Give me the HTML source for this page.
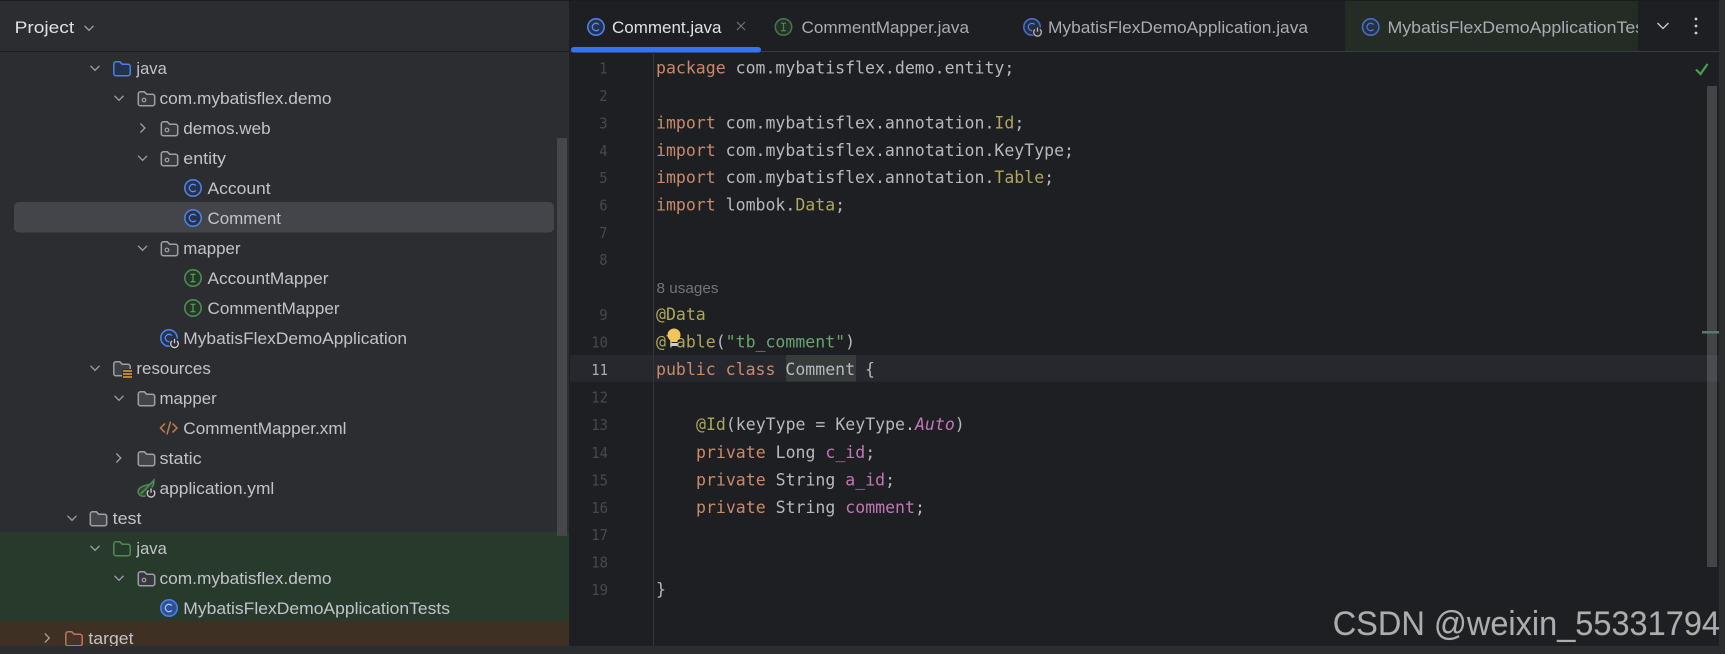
<!DOCTYPE html>
<html><head><meta charset="utf-8"><title>Comment.java</title>
<style>
html,body{margin:0;padding:0;background:#1e1f22;width:1725px;height:654px;overflow:hidden}
svg{display:block}
text{white-space:pre}
.u{font-family:"Liberation Sans",sans-serif;font-size:16.4px;fill:#c0c3ca}
.t{font-family:"Liberation Sans",sans-serif;font-size:16.4px;fill:#a8acb3}
.c{font-family:"DejaVu Sans Mono","Liberation Mono",monospace;font-size:16.55px;fill:#b6b8be}
.n{font-family:"DejaVu Sans Mono","Liberation Mono",monospace;font-size:15.5px;fill:#454950}
.k{fill:#c98a6a}.a{fill:#aca75c}.s{fill:#67a56f}.f{fill:#c077b5}
.chev{fill:none;stroke:#9da0a8;stroke-width:1.3}
</style></head><body>
<svg xmlns="http://www.w3.org/2000/svg" width="1725" height="654" viewBox="0 0 1725 654">
<defs>
<path id="fd" stroke-width="1.5" d="M.8 3A2.2 2.2 0 0 1 3 .8H6.8L9.2 3.200H15A2.200 2.200 0 0 1 17.200 5.400V12.600A2.200 2.200 0 0 1 15 14.800H3A2.200 2.200 0 0 1 .8 12.600Z"/>
<g id="pk"><use href="#fd" fill="#36383c" stroke="#9da0a8"/><circle cx="6.500" cy="9" r="1.800" fill="none" stroke="#9da0a8" stroke-width="1.200"/></g>
<path id="dn" class="chev" d="M-4.500-2.200 0 2.300 4.500-2.200"/>
<path id="rt" class="chev" d="M-2.200-4.500 2.300 0-2.200 4.500"/>
<g id="cl"><circle r="8.200" fill="#25324d" stroke="#4d7fe6" stroke-width="1.600"/><path d="M2.800-2.400A3.700 3.700 0 1 0 2.800 2.400" fill="none" stroke="#5a8cf0" stroke-width="1.300"/></g>
<g id="in"><circle r="8.200" fill="#253627" stroke="#4f8a55" stroke-width="1.600"/><path d="M-2.400-3.700H2.400M0-3.700V3.700M-2.400 3.700H2.400" fill="none" stroke="#57965c" stroke-width="1.300"/></g>
<g id="pw"><circle r="5.500" fill="#2b2d30"/><path d="M-2.500-2.600A3.800 3.800 0 1 0 2.500-2.600M0-4.600V-.2" fill="none" stroke="#ced0d6" stroke-width="1.300"/></g>
<clipPath id="lt"><rect x="1345" y="0" width="293" height="52"/></clipPath>
</defs>

<!-- backgrounds -->
<rect width="1725" height="654" fill="#1e1f22"/>
<rect x="0" y="0" width="569" height="654" fill="#2b2d30"/>
<rect x="0" y="0" width="1725" height="1" fill="#1a1b1d"/>
<rect x="0" y="51" width="569" height="1" fill="#1e1f22"/>
<rect x="14" y="202" width="540" height="30.500" rx="5" fill="#43454a"/>
<rect x="0" y="532" width="569" height="89" fill="#283a2b"/>
<rect x="0" y="621" width="569" height="25" fill="#3f3024"/>
<rect x="557" y="138" width="10" height="398" fill="#45474a"/>
<rect x="1719" y="0" width="6" height="654" fill="#2b2d30"/>

<!-- project header -->
<text class="u" x="14.700" y="33" textLength="59.500" lengthAdjust="spacingAndGlyphs" style="fill:#dfe1e5">Project</text>
<use href="#dn" x="89" y="28"/>

<!-- tree chevrons -->
<use href="#dn" x="95" y="68"/><use href="#dn" x="119" y="98"/><use href="#rt" x="142.600" y="128"/><use href="#dn" x="142.600" y="158"/>
<use href="#dn" x="142.600" y="248"/><use href="#dn" x="95" y="368"/><use href="#dn" x="119" y="398"/><use href="#rt" x="118.500" y="458"/>
<use href="#dn" x="72" y="518"/><use href="#dn" x="95" y="548"/><use href="#dn" x="119" y="578"/><use href="#rt" x="47" y="638"/>

<!-- tree icons -->
<use href="#fd" x="113" y="61" fill="#25324d" stroke="#4d7fe6"/>
<use href="#pk" x="137.500" y="91"/>
<use href="#pk" x="160.500" y="121"/>
<use href="#pk" x="160.500" y="151"/>
<use href="#cl" x="193" y="188"/>
<use href="#cl" x="193" y="218"/>
<use href="#pk" x="160.500" y="241"/>
<use href="#in" x="193" y="278"/>
<use href="#in" x="193" y="308"/>
<use href="#cl" x="169" y="338"/><use href="#pw" x="174.500" y="343.500"/>
<use href="#fd" x="113" y="361" fill="#3e4044" stroke="#9da0a8"/>
<rect x="122" y="369" width="11" height="9" fill="#2b2d30"/>
<path d="M123 371H132M123 374H132M123 377H132" stroke="#d9a343" stroke-width="1.500" fill="none"/>
<use href="#fd" x="137.500" y="391" fill="#43454a" stroke="#9da0a8"/>
<path d="M165 423.500 160.500 428 165 432.500M172.500 423.500 177 428 172.500 432.500M170.500 421.500 167 434.500" fill="none" stroke="#c57951" stroke-width="1.500"/>
<use href="#fd" x="137.500" y="451" fill="#43454a" stroke="#9da0a8"/>
<path d="M154 480C153.500 483 151 484 147 485C141 486.500 137.500 489 138.200 492.500C138.800 495.500 142 496.800 145.500 496M141 494C142 490.500 146 489.500 149 489C152 488.500 154 485.500 154 480Z" fill="#2d4a30" stroke="#4f8a55" stroke-width="1.500"/>
<use href="#pw" x="151" y="493"/>
<use href="#fd" x="89.500" y="511" fill="#43454a" stroke="#9da0a8"/>
<use href="#fd" x="113" y="541" fill="#283a2b" stroke="#4f8a55"/>
<use href="#pk" x="137.500" y="571"/>
<g transform="translate(169 608)"><circle r="8.200" fill="#2d4f96" stroke="#4d7fe6" stroke-width="1.600"/><path d="M2.800-2.400A3.700 3.700 0 1 0 2.800 2.400" fill="none" stroke="#a9c3f5" stroke-width="1.300"/></g>
<use href="#fd" x="65" y="631" fill="#45322b" stroke="#b8775a"/>

<!-- tree text -->
<text class="u" x="136.400" y="74" textLength="30.400" lengthAdjust="spacingAndGlyphs">java</text>
<text class="u" x="159.500" y="104" textLength="172" lengthAdjust="spacingAndGlyphs">com.mybatisflex.demo</text>
<text class="u" x="183.300" y="134" textLength="87.300" lengthAdjust="spacingAndGlyphs">demos.web</text>
<text class="u" x="183.300" y="164" textLength="42.700" lengthAdjust="spacingAndGlyphs">entity</text>
<text class="u" x="207.500" y="194" textLength="63.100" lengthAdjust="spacingAndGlyphs">Account</text>
<text class="u" x="207.500" y="224" textLength="73.500" lengthAdjust="spacingAndGlyphs">Comment</text>
<text class="u" x="183.300" y="254" textLength="57.200" lengthAdjust="spacingAndGlyphs">mapper</text>
<text class="u" x="207.500" y="284" textLength="121" lengthAdjust="spacingAndGlyphs">AccountMapper</text>
<text class="u" x="207.500" y="314" textLength="132.100" lengthAdjust="spacingAndGlyphs">CommentMapper</text>
<text class="u" x="183.300" y="344" textLength="223.700" lengthAdjust="spacingAndGlyphs">MybatisFlexDemoApplication</text>
<text class="u" x="136.400" y="374" textLength="74.400" lengthAdjust="spacingAndGlyphs">resources</text>
<text class="u" x="159.500" y="404" textLength="57.200" lengthAdjust="spacingAndGlyphs">mapper</text>
<text class="u" x="183.300" y="434" textLength="163.200" lengthAdjust="spacingAndGlyphs">CommentMapper.xml</text>
<text class="u" x="159.500" y="464" textLength="42.200" lengthAdjust="spacingAndGlyphs">static</text>
<text class="u" x="159.500" y="494" textLength="114.800" lengthAdjust="spacingAndGlyphs">application.yml</text>
<text class="u" x="112.600" y="524" textLength="28.900" lengthAdjust="spacingAndGlyphs">test</text>
<text class="u" x="136.400" y="554" textLength="30.400" lengthAdjust="spacingAndGlyphs">java</text>
<text class="u" x="159.500" y="584" textLength="172" lengthAdjust="spacingAndGlyphs">com.mybatisflex.demo</text>
<text class="u" x="183.300" y="614" textLength="266.700" lengthAdjust="spacingAndGlyphs">MybatisFlexDemoApplicationTests</text>
<text class="u" x="88.400" y="644" textLength="45.100" lengthAdjust="spacingAndGlyphs">target</text>
<rect x="0" y="646" width="1725" height="8" fill="#2b2d30"/>

<!-- tabs -->
<rect x="1345" y="1" width="293" height="50" fill="#252c26"/>
<rect x="570" y="51" width="1149" height="1" fill="#393b40"/>
<use href="#cl" x="596" y="27"/>
<text class="t" x="612" y="33" textLength="109.500" lengthAdjust="spacingAndGlyphs" style="fill:#dfe1e5">Comment.java</text>
<path d="M737 22 745 30M745 22 737 30" stroke="#6f7379" stroke-width="1.200" fill="none"/>
<rect x="571" y="47" width="190" height="5.500" rx="2.700" fill="#3574f0"/>
<g opacity=".8"><use href="#in" x="783.500" y="27"/></g>
<text class="t" x="801.500" y="33" textLength="167.500" lengthAdjust="spacingAndGlyphs">CommentMapper.java</text>
<g opacity=".85"><use href="#cl" x="1032" y="27"/><use href="#pw" x="1037.500" y="32"/></g>
<text class="t" x="1048" y="33" textLength="260" lengthAdjust="spacingAndGlyphs">MybatisFlexDemoApplication.java</text>
<g opacity=".8"><use href="#cl" x="1370.700" y="27"/></g>
<g clip-path="url(#lt)"><text class="t" x="1387.500" y="33" textLength="308" lengthAdjust="spacingAndGlyphs">MybatisFlexDemoApplicationTests.java</text></g>
<path d="M1657.500 23 1663 28.500 1668.500 23" fill="none" stroke="#ced0d6" stroke-width="1.300"/>
<circle cx="1696" cy="19" r="1.400" fill="#ced0d6"/><circle cx="1696" cy="26" r="1.400" fill="#ced0d6"/><circle cx="1696" cy="33" r="1.400" fill="#ced0d6"/>

<!-- editor -->
<rect x="570" y="355" width="1149" height="26.700" fill="#26282e"/>
<rect x="786" y="355" width="70" height="26.700" fill="#373b39"/>
<rect x="653" y="52" width="1" height="594" fill="#313438"/>
<path d="M1696 69.500 1700.500 74 1707.500 64" fill="none" stroke="#499c54" stroke-width="2.200"/>
<rect x="1707" y="86" width="10" height="481" fill="#434445"/>
<rect x="1707" y="355" width="10" height="26.700" fill="#4a4c50"/>
<rect x="1702" y="331" width="17" height="2.500" fill="#5a7a6e"/>

<!-- line numbers -->
<text class="n" x="599.300" y="73.500" textLength="8.300" lengthAdjust="spacingAndGlyphs">1</text>
<text class="n" x="599.300" y="101" textLength="8.300" lengthAdjust="spacingAndGlyphs">2</text>
<text class="n" x="599.300" y="128.400" textLength="8.300" lengthAdjust="spacingAndGlyphs">3</text>
<text class="n" x="599.300" y="155.800" textLength="8.300" lengthAdjust="spacingAndGlyphs">4</text>
<text class="n" x="599.300" y="183" textLength="8.300" lengthAdjust="spacingAndGlyphs">5</text>
<text class="n" x="599.300" y="210.400" textLength="8.300" lengthAdjust="spacingAndGlyphs">6</text>
<text class="n" x="599.300" y="237.800" textLength="8.300" lengthAdjust="spacingAndGlyphs">7</text>
<text class="n" x="599.300" y="265" textLength="8.300" lengthAdjust="spacingAndGlyphs">8</text>
<text class="n" x="599.300" y="320" textLength="8.300" lengthAdjust="spacingAndGlyphs">9</text>
<text class="n" x="591.300" y="347.500" textLength="16.700" lengthAdjust="spacingAndGlyphs">10</text>
<text class="n" x="591.300" y="375" textLength="16.700" lengthAdjust="spacingAndGlyphs" style="fill:#a8adbd">11</text>
<text class="n" x="591.300" y="402.500" textLength="16.700" lengthAdjust="spacingAndGlyphs">12</text>
<text class="n" x="591.300" y="430" textLength="16.700" lengthAdjust="spacingAndGlyphs">13</text>
<text class="n" x="591.300" y="458" textLength="16.700" lengthAdjust="spacingAndGlyphs">14</text>
<text class="n" x="591.300" y="485.500" textLength="16.700" lengthAdjust="spacingAndGlyphs">15</text>
<text class="n" x="591.300" y="513" textLength="16.700" lengthAdjust="spacingAndGlyphs">16</text>
<text class="n" x="591.300" y="540" textLength="16.700" lengthAdjust="spacingAndGlyphs">17</text>
<text class="n" x="591.300" y="567.500" textLength="16.700" lengthAdjust="spacingAndGlyphs">18</text>
<text class="n" x="591.300" y="595" textLength="16.700" lengthAdjust="spacingAndGlyphs">19</text>

<!-- code -->
<text class="c" x="656" y="73.500"><tspan class="k">package</tspan> com.mybatisflex.demo.entity;</text>
<text class="c" x="656" y="128.400"><tspan class="k">import</tspan> com.mybatisflex.annotation.<tspan class="a">Id</tspan>;</text>
<text class="c" x="656" y="155.800"><tspan class="k">import</tspan> com.mybatisflex.annotation.KeyType;</text>
<text class="c" x="656" y="183"><tspan class="k">import</tspan> com.mybatisflex.annotation.<tspan class="a">Table</tspan>;</text>
<text class="c" x="656" y="210.400"><tspan class="k">import</tspan> lombok.<tspan class="a">Data</tspan>;</text>
<text class="u" x="656.500" y="293" textLength="62" lengthAdjust="spacingAndGlyphs" style="font-size:14.500px;fill:#70747b">8 usages</text>
<text class="c" x="656" y="320"><tspan class="a">@Data</tspan></text>
<text class="c" x="656" y="347.500"><tspan class="a">@Table</tspan>(<tspan class="s">"tb_comment"</tspan>)</text>
<text class="c" x="656" y="375"><tspan class="k">public class</tspan> Comment {</text>
<text class="c" x="696" y="430"><tspan class="a">@Id</tspan>(keyType = KeyType.<tspan class="f" font-style="italic">Auto</tspan>)</text>
<text class="c" x="696" y="458"><tspan class="k">private</tspan> Long <tspan class="f">c_id</tspan>;</text>
<text class="c" x="696" y="485.500"><tspan class="k">private</tspan> String <tspan class="f">a_id</tspan>;</text>
<text class="c" x="696" y="513"><tspan class="k">private</tspan> String <tspan class="f">comment</tspan>;</text>
<text class="c" x="656" y="595">}</text>

<!-- bulb -->
<circle cx="674" cy="335" r="6.500" fill="#f2c55c"/>
<rect x="670.500" y="340" width="7" height="2" fill="#f2c55c"/>
<rect x="670.500" y="343" width="7" height="3" fill="#ced0d6"/>

<!-- watermark -->
<text x="1332.700" y="635" textLength="387.300" lengthAdjust="spacingAndGlyphs" style="font-family:'Liberation Sans',Arial,sans-serif;font-size:34px;fill:#adadad;paint-order:stroke" stroke="#3a3a3a" stroke-width=".5">CSDN @weixin_55331794</text>
</svg>
</body></html>
